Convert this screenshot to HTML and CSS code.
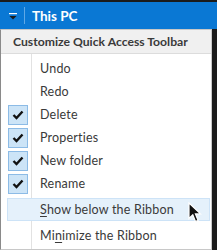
FILE: index.html
```html
<!DOCTYPE html>
<html>
<head>
<meta charset="utf-8">
<link rel="stylesheet" href="styles.css">
</head>
<body>
<div class="screen">
  <div class="titlebar">
    <svg class="qat" width="10" height="8" viewBox="0 0 10 8"><rect x="1" y="0" width="8" height="1.2" fill="#fff"/><path d="M1.5 3 L8.5 3 L5 6.5 Z" fill="#1a1a1a"/></svg>
    <span class="vsep"></span>
    <span class="title">This PC</span>
  </div>
  <div class="menu">
    <div class="menu-head">Customize Quick Access Toolbar</div>
    <div class="items">
      <div class="item"><span class="check"></span><span class="label">Undo</span></div>
      <div class="item"><span class="check"></span><span class="label">Redo</span></div>
      <div class="item"><span class="check on"><svg width="12" height="10" viewBox="0 0 12 10"><path d="M1.5 5 L4.5 8 L10.5 1.5" fill="none" stroke="#111" stroke-width="2.4"/></svg></span><span class="label">Delete</span></div>
      <div class="item"><span class="check on"><svg width="12" height="10" viewBox="0 0 12 10"><path d="M1.5 5 L4.5 8 L10.5 1.5" fill="none" stroke="#111" stroke-width="2.4"/></svg></span><span class="label">Properties</span></div>
      <div class="item"><span class="check on"><svg width="12" height="10" viewBox="0 0 12 10"><path d="M1.5 5 L4.5 8 L10.5 1.5" fill="none" stroke="#111" stroke-width="2.4"/></svg></span><span class="label">New folder</span></div>
      <div class="item"><span class="check on"><svg width="12" height="10" viewBox="0 0 12 10"><path d="M1.5 5 L4.5 8 L10.5 1.5" fill="none" stroke="#111" stroke-width="2.4"/></svg></span><span class="label">Rename</span></div>
      <div class="divider"></div>
      <div class="item hover"><span class="check"></span><span class="label"><u>S</u>how below the Ribbon</span>
        <svg class="cursor" width="14" height="21" viewBox="0 0 14 21"><path d="M1 1 L1 16.5 L4.8 12.8 L7.5 19.5 L10 18.4 L7.4 11.9 L12.5 11.9 Z" fill="#111" stroke="#fff" stroke-width="1.2"/></svg>
      </div>
      <div class="item"><span class="check"></span><span class="label">Mi<u>n</u>imize the Ribbon</span></div>
    </div>
  </div>
</div>
</body>
</html>
```
FILE: styles.css
```css
html, body {
  margin: 0;
  padding: 0;
  background: #1b1b1b;
}
.screen {
  width: 217px;
  height: 250px;
  padding-top: 2px;
  box-sizing: border-box;
  overflow: hidden;
  font-family: Lato, "Noto Sans", sans-serif;
}
.titlebar {
  height: 27px;
  background: #0a78d4;
  display: flex;
  align-items: center;
  padding-left: 8px;
  color: #fff;
}
.qat {
  margin-top: 3px;
}
.vsep {
  width: 1px;
  height: 17px;
  background: #5fa8e6;
  margin-left: 6px;
  margin-right: 7px;
}
.title {
  font-size: 13.5px;
  font-weight: 700;
}
.menu {
  width: 212px;
  height: 221px;
  background: #fff;
  border: 1px solid #c8c8c8;
  border-left-color: #8a8a8a;
  box-sizing: border-box;
  display: flex;
  flex-direction: column;
}
.menu-head {
  height: 23px;
  background: #f0f0f0;
  border-bottom: 1px solid #dcdcdc;
  font-size: 12.2px;
  font-weight: 700;
  color: #3a3a3a;
  display: flex;
  align-items: center;
  padding-left: 12px;
}
.items {
  flex: 1;
  display: flex;
  flex-direction: column;
  padding-top: 3px;
  background: linear-gradient(to right, transparent 30px, #e2e2e2 30px, #e2e2e2 31px, transparent 31px);
}
.item {
  position: relative;
  height: 23px;
  display: flex;
  align-items: center;
  margin-left: 6px;
  margin-right: 1px;
  box-sizing: border-box;
  border: 1px solid transparent;
}
.check {
  width: 20px;
  height: 20px;
  box-sizing: border-box;
  display: flex;
  align-items: center;
  justify-content: center;
  flex: none;
}
.check.on {
  background: #cce4f7;
  border: 1px solid #8cbbe6;
}
.label {
  margin-left: 12px;
  font-size: 12.5px;
  color: #3a3a3a;
  letter-spacing: 0.2px;
}
.label u {
  text-decoration-thickness: 1px;
  text-underline-offset: 2px;
}
.divider {
  height: 3px;
}
.item.hover {
  background: #e5f1fb;
  border-color: #cde3f7;
  margin-bottom: 3px;
}
.cursor {
  position: absolute;
  left: 180px;
  top: 3px;
}
```
